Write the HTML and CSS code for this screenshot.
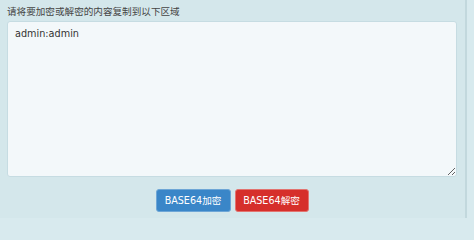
FILE: index.html
```html
<!DOCTYPE html>
<html lang="zh-CN">
<head>
<meta charset="utf-8">
<title>BASE64</title>
<link rel="stylesheet" href="styles.css">
</head>
<body>
<div class="page">
  <div class="panel">
    <div class="label">请将要加密或解密的内容复制到以下区域</div>
    <textarea class="input">admin:admin</textarea>
    <div class="actions">
      <button class="btn btn-blue">BASE64加密</button>
      <button class="btn btn-red">BASE64解密</button>
    </div>
  </div>
</div>
</body>
</html>
```

FILE: styles.css
```css
html, body {
  margin: 0;
  padding: 0;
  background: #d8eaee;
  height: 218px;
  overflow: hidden;
}
body {
  font-family: "DejaVu Sans", "Noto Sans CJK SC", sans-serif;
  width: 474px;
}
.page {
  width: 465px;
  height: 218px;
  background: #d4e7eb;
  border-right: 2px solid #c2d8dd;
}
.panel {
  padding: 4px 8px 0 7px;
}
.label {
  font-size: 9.6px;
  line-height: 16px;
  color: #444;
  margin-bottom: 1px;
  white-space: nowrap;
}
.input {
  display: block;
  width: 450px;
  height: 156px;
  box-sizing: border-box;
  margin: 0;
  border: 1px solid #c6dce2;
  border-radius: 3px;
  background: #f3f8fa;
  padding: 6px 7px;
  font-family: "DejaVu Sans", sans-serif;
  font-size: 9.7px;
  line-height: 12px;
  color: #333;
  outline: none;
}
.actions {
  display: flex;
  justify-content: center;
  gap: 4px;
  margin-top: 12px;
}
.btn {
  height: 23px;
  box-sizing: border-box;
  border-radius: 3px;
  color: #fff;
  font-family: "DejaVu Sans", "Noto Sans CJK SC", sans-serif;
  font-size: 9.6px;
  line-height: 21px;
  padding: 0;
  cursor: pointer;
}
.btn-blue {
  width: 75px;
  background: #3a86c8;
  border: 1px solid #6ea6d6;
}
.btn-red {
  width: 74px;
  background: #d62f2b;
  border: 1px solid #e27470;
}
```
